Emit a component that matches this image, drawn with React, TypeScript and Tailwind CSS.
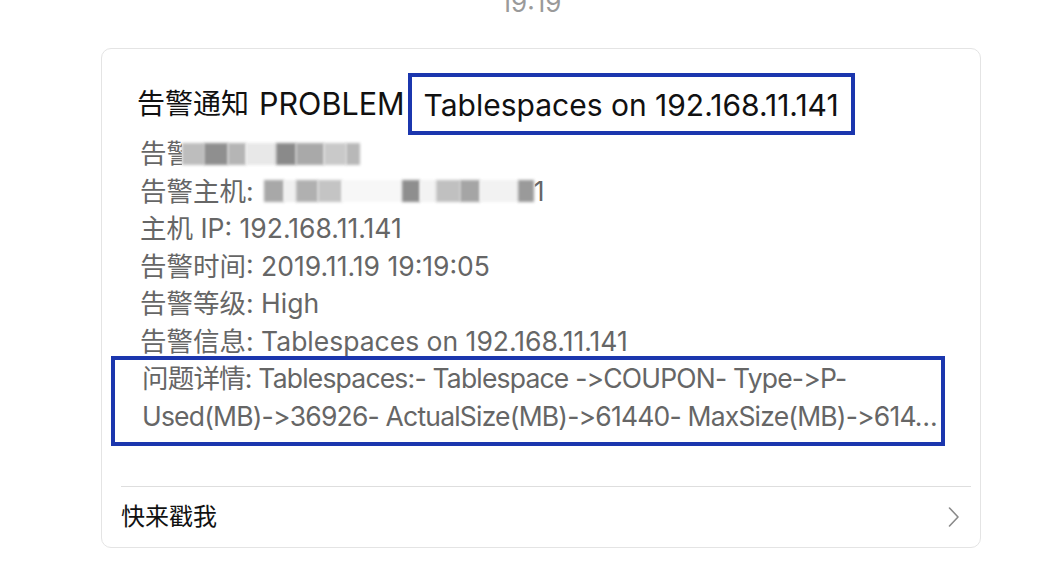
import React from "react";

const FONT = { fontFamily: '"Inter", "Noto Sans CJK SC", sans-serif' };

function Blur({ w, c, h = 22 }: { w: number; c: string; h?: number }) {
  return (
    <span
      className="inline-block align-middle blur-[1.5px]"
      style={{ width: w, height: h, background: c }}
    />
  );
}

export default function App() {
  return (
    <div className="w-[1062px] h-[562px] bg-white overflow-hidden" style={FONT}>
      <div className="h-[48px] flex justify-center">
        <div className="mt-[-10px] text-[26px] leading-[26px] text-[#9a9a9a]">19:19</div>
      </div>
      <div className="ml-[101px] w-[880px] h-[500px] border border-[#e4e4e4] rounded-[10px] pt-[24px] flex flex-col">
        <div className="flex items-center pl-[35px] text-[#111]">
          <span className="text-[28px]">告警通知</span>
          <span className="text-[30.5px] leading-[40px] ml-[10px]">PROBLEM</span>
          <div className="ml-[3px] h-[62px] border-[4px] border-[#1b36ae] pl-[12px] pr-[12px] pt-[3px] flex items-center text-[30px]">
            Tablespaces on 192.168.11.141
          </div>
        </div>
        <div className="pl-[38px] text-[26.5px] leading-[37.5px] text-[#666]">
          <div className="flex items-center">
            <span>告</span>
            <span className="inline-block w-[15px] overflow-hidden">警</span>
            <Blur w={22} c="#bdbdbd" />
            <Blur w={24} c="#8f8f8f" />
            <Blur w={18} c="#b5b5b5" />
            <Blur w={30} c="#e8e8e8" />
            <Blur w={20} c="#8a8a8a" />
            <Blur w={28} c="#a9a9a9" />
            <Blur w={22} c="#c9c9c9" />
            <Blur w={14} c="#b8b8b8" />
          </div>
          <div className="flex items-center">
            <span>告警主机:</span>
            <span className="w-[10px]" />
            <Blur w={20} c="#a8a8a8" />
            <Blur w={12} c="#f0f0f0" />
            <Blur w={22} c="#b0b0b0" />
            <Blur w={24} c="#c4c4c4" />
            <Blur w={60} c="#f7f7f7" />
            <Blur w={18} c="#8e8e8e" />
            <Blur w={16} c="#f3f3f3" />
            <Blur w={24} c="#c0c0c0" />
            <Blur w={20} c="#a5a5a5" />
            <Blur w={38} c="#f2f2f2" />
            <Blur w={16} c="#9a9a9a" />
            <span>1</span>
          </div>
          <div>主机 IP: 192.168.11.141</div>
          <div>告警时间: 2019.11.19 19:19:05</div>
          <div>告警等级: High</div>
          <div>告警信息: Tablespaces on 192.168.11.141</div>
        </div>
        <div className="mt-[-4px] ml-[9px] w-[834px] border-[4px] border-[#1b36ae] pl-[27px] pb-[7px] text-[26.5px] leading-[37.5px] text-[#666] tracking-[-0.8px]">
          <div className="whitespace-nowrap">问题详情: Tablespaces:- Tablespace -&gt;COUPON- Type-&gt;P-</div>
          <div className="whitespace-nowrap overflow-hidden">
            Used(MB)-&gt;36926- ActualSize(MB)-&gt;61440- MaxSize(MB)-&gt;614…
          </div>
        </div>
        <div className="flex-1" />
        <div className="ml-[19px] mr-[9px] h-px bg-[#dedede]" />
        <div className="h-[60px] flex items-center justify-between pl-[19px] pr-[20px]">
          <span className="text-[24px] text-[#111]">快来戳我</span>
          <svg width="12" height="22" viewBox="0 0 12 22" fill="none">
            <polyline points="1.5,2 10,11 1.5,20" stroke="#8a8a8a" strokeWidth="1.6" strokeLinecap="round" strokeLinejoin="round" />
          </svg>
        </div>
      </div>
    </div>
  );
}
